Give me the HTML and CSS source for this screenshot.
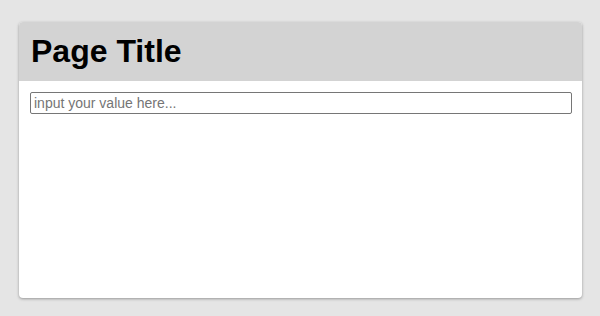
FILE: index.html
```html
<!DOCTYPE html>
<html>

<head>
    <meta charset="utf-8">
    <meta name="viewport" content="width=device-width">
    <title>Page Title</title>
    <link rel="stylesheet" href="styles.css">
</head>

<body>
    <div class="card">
        <div class="card-header">
            <h1>Page Title</h1>
        </div>
        <div class="card-body">
            <input class="value" type="text" placeholder="input your value here...">
        </div>
    </div>
</body>

</html>
```
FILE: styles.css
```css
* {
    margin: 0;
    padding: 0;
    box-sizing: border-box;
}

body {
    background: #e5e5e5;
    padding: 22px 18px 18px 19px;
    font-family: "Liberation Sans", Arial, sans-serif;
}

.card {
    background: #fff;
    border-radius: 4px;
    box-shadow: 0 1px 3px rgba(0, 0, 0, .35);
    height: 276px;
    overflow: hidden;
}

.card-header {
    background: #d3d3d3;
    height: 59px;
    padding: 0 12px;
    display: flex;
    align-items: center;
}

.card-header h1 {
    font-size: 32px;
    font-weight: bold;
    color: #000;
}

.card-body {
    padding: 11px 10px 11px 11px;
}

.value {
    display: block;
    width: 100%;
    height: 22px;
    padding: 0 3px;
    border: 1px solid #767676;
    border-radius: 2px;
    font-family: "Liberation Sans", Arial, sans-serif;
    font-size: 14px;
    color: #000;
}

.value::placeholder {
    color: #757575;
}
```
